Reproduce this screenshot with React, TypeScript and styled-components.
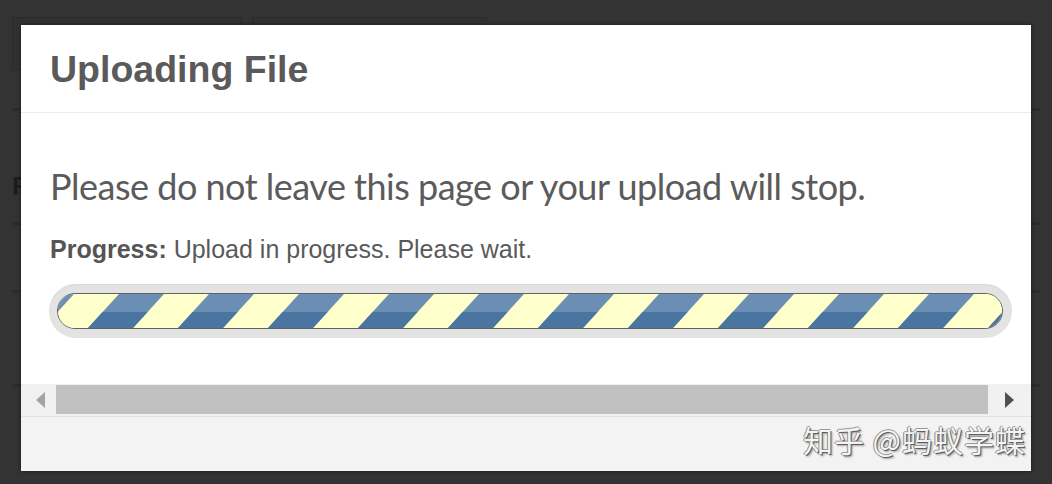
import React from "react";
import styled, { createGlobalStyle } from "styled-components";

const GlobalStyle = createGlobalStyle`
  html, body { margin: 0; padding: 0; background: #333333; }
  body { width: 1052px; height: 484px; overflow: hidden; font-family: "Liberation Sans", Arial, sans-serif; }
  #root { position: relative; width: 1052px; height: 484px; }
`;

/* ---------- underlying page (dimmed) ---------- */
const Page = styled.div`
  padding: 17px 12px 0 12px;
  display: flex;
  flex-direction: column;
`;
const Toolbar = styled.div`
  display: flex;
  gap: 10px;
  height: 53px;
`;
const ToolBox = styled.div<{ $w: number }>`
  width: ${(p) => p.$w}px;
  box-sizing: border-box;
  border: 1px solid #2a2a2a;
  background: #313131;
`;
const PageRule = styled.div<{ $mt: number }>`
  margin-top: ${(p) => p.$mt}px;
  height: 3px;
  background: #2b2b2b;
`;
const PageHeading = styled.div`
  margin-top: 60px;
  height: 51px;
  font: bold 26px "Liberation Sans", Arial, sans-serif;
  color: #1d1d1d;
`;

/* ---------- overlay + dialog ---------- */
const Dialog = styled.div`
  position: absolute;
  left: 21px;
  top: 25px;
  width: 1010px;
  height: 446px;
  background: #ffffff;
  box-shadow: 0 0 4px rgba(0, 0, 0, 0.5);
  display: flex;
  flex-direction: column;
  overflow: hidden;
`;
const Header = styled.div`
  box-sizing: border-box;
  height: 88px;
  padding: 26px 0 0 29px;
  border-bottom: 1px solid #ececec;
`;
const Title = styled.h1`
  margin: 0;
  font: bold 37.5px/37px "Liberation Sans", Arial, sans-serif;
  color: #5a5a5a;
`;
const Body = styled.div`
  flex: 1;
  padding: 55px 19px 0 28px;
  display: flex;
  flex-direction: column;
`;
const Lead = styled.p`
  margin: 0 0 0 1px;
  font: 400 36px/36px Lato, "Open Sans", sans-serif;
  color: #5b5b5b;
  letter-spacing: -0.5px;
`;
const Status = styled.p`
  margin: 33px 0 0 1px;
  font: 25px/25px "Liberation Sans", Arial, sans-serif;
  color: #5a5a5a;
  b { font-weight: bold; color: #555; }
`;
const Track = styled.div`
  margin-top: 22px;
  box-sizing: border-box;
  height: 54px;
  padding: 9px 9px 9px 8px;
  border-radius: 27px;
  background: #e3e3e3;
  box-shadow: inset 0 1px 2px rgba(0, 0, 0, 0.06);
`;
const Bar = styled.div`
  box-sizing: border-box;
  height: 36px;
  border: 1px solid #626262;
  border-radius: 18px;
  overflow: hidden;
  background: #ffffcc;
  svg { display: block; width: 100%; height: 100%; }
`;

const ScrollBar = styled.div`
  height: 32px;
  background: #f1f1f1;
  display: flex;
  align-items: stretch;
`;
const ScrollBtn = styled.div<{ $color: string; $dir: "left" | "right" }>`
  width: ${(p) => (p.$dir === "left" ? 35 : 43)}px;
  display: flex;
  align-items: center;
  justify-content: center;
  &::before {
    content: "";
    width: 0;
    height: 0;
    border-top: 8px solid transparent;
    border-bottom: 8px solid transparent;
    ${(p) =>
      p.$dir === "left"
        ? `border-right: 9px solid ${p.$color}; margin-left: 4px;`
        : `border-left: 9px solid ${p.$color}; margin-left: 0px;`}
  }
`;
const Thumb = styled.div`
  flex: 1;
  margin: 1px 0 2px 0;
  background: #c1c1c1;
`;
const Footer = styled.div`
  height: 54px;
  border-top: 1px solid #e2e2e2;
  background: #f3f3f3;
`;

const Watermark = styled.div`
  position: absolute;
  right: 26px;
  top: 420px;
  font: 30px/38px "Noto Sans CJK SC", sans-serif;
  color: #f4f4f4;
  letter-spacing: 1px;
  text-shadow: 1px 1px 0 #5e5e5e, -1px 0 0 #8a8a8a, 0 -1px 0 #9a9a9a, 2px 2px 2px rgba(0,0,0,0.35);
  white-space: nowrap;
`;

const Stripes: React.FC = () => {
  const h = 34;
  const shift = 31;
  const stripe = (b: number) =>
    `${b},${h} ${b + 45},${h} ${b + 45 + shift},0 ${b + shift},0`;
  const split = 18;
  const off = (shift * (h - split)) / h;
  const lower = (b: number) =>
    `${b},${h} ${b + 45},${h} ${b + 45 + off},${split} ${b + off},${split}`;
  return (
    <svg viewBox={`0 0 944 ${h}`} preserveAspectRatio="none">
      <defs>
        <pattern id="candy" width="90" height={h} patternUnits="userSpaceOnUse">
          <rect width="90" height={h} fill="#ffffcc" />
          <polygon points={stripe(30)} fill="#6b8fb4" />
          <polygon points={stripe(-60)} fill="#6b8fb4" />
          <polygon points={lower(30)} fill="#4a75a0" />
          <polygon points={lower(-60)} fill="#4a75a0" />
        </pattern>
      </defs>
      <rect width="944" height={h} fill="url(#candy)" />
    </svg>
  );
};

export default function App() {
  return (
    <>
      <GlobalStyle />
      <Page>
        <Toolbar>
          <ToolBox $w={230} />
          <ToolBox $w={235} />
        </Toolbar>
        <PageRule $mt={38} />
        <PageHeading>F</PageHeading>
        <PageRule $mt={0} />
        <PageRule $mt={65} />
        <PageRule $mt={91} />
      </Page>
      <Dialog>
        <Header>
          <Title>Uploading File</Title>
        </Header>
        <Body>
          <Lead>Please do not leave this page or your upload will stop.</Lead>
          <Status>
            <b>Progress:</b> Upload in progress. Please wait.
          </Status>
          <Track>
            <Bar>
              <Stripes />
            </Bar>
          </Track>
        </Body>
        <ScrollBar>
          <ScrollBtn $dir="left" $color="#a3a3a3" />
          <Thumb />
          <ScrollBtn $dir="right" $color="#505050" />
        </ScrollBar>
        <Footer />
      </Dialog>
      <Watermark>知乎 @蚂蚁学蝶</Watermark>
    </>
  );
}
